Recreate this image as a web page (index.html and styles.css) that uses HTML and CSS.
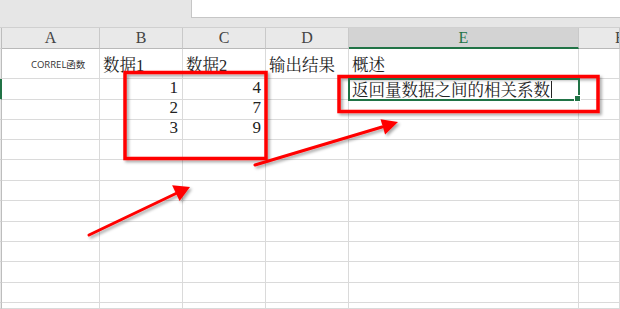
FILE: index.html
```html
<!DOCTYPE html>
<html lang="zh-CN">

<head>
  <meta charset="UTF-8">
  <meta name="viewport" content="width=device-width, initial-scale=1.0">
  <title>CORREL函数</title>
  <link rel="stylesheet" href="styles.css">
</head>

<body>

  <div class="app">
    <div class="topbar">
      <div class="formula"></div>
    </div>

    <div class="sheet">
      <!-- 列标题 -->
      <div class="hd rh"></div>
      <div class="hd">A</div>
      <div class="hd">B</div>
      <div class="hd">C</div>
      <div class="hd">D</div>
      <div class="hd active">E</div>
      <div class="hd edge">F</div>

      <!-- 第1行 -->
      <div class="rh"></div>
      <div class="cell small">CORREL函数</div>
      <div class="cell">数据1</div>
      <div class="cell">数据2</div>
      <div class="cell">输出结果</div>
      <div class="cell">概述</div>
      <div class="cell"></div>

      <!-- 第2行 -->
      <div class="rh on"></div>
      <div class="cell"></div>
      <div class="cell num">1</div>
      <div class="cell num">4</div>
      <div class="cell"></div>
      <div class="cell selected">返回量数据之间的相关系数<span class="caret"></span></div>
      <div class="cell"></div>

      <div class="rh"></div>
      <div class="cell"></div>
      <div class="cell num">2</div>
      <div class="cell num">7</div>
      <div class="cell"></div>
      <div class="cell"></div>
      <div class="cell"></div>

      <div class="rh"></div>
      <div class="cell"></div>
      <div class="cell num">3</div>
      <div class="cell num">9</div>
      <div class="cell"></div>
      <div class="cell"></div>
      <div class="cell"></div>

      <div class="rh"></div><div class="cell"></div><div class="cell"></div><div class="cell"></div><div class="cell"></div><div class="cell"></div><div class="cell"></div>
      <div class="rh"></div><div class="cell"></div><div class="cell"></div><div class="cell"></div><div class="cell"></div><div class="cell"></div><div class="cell"></div>
      <div class="rh"></div><div class="cell"></div><div class="cell"></div><div class="cell"></div><div class="cell"></div><div class="cell"></div><div class="cell"></div>
      <div class="rh"></div><div class="cell"></div><div class="cell"></div><div class="cell"></div><div class="cell"></div><div class="cell"></div><div class="cell"></div>
      <div class="rh"></div><div class="cell"></div><div class="cell"></div><div class="cell"></div><div class="cell"></div><div class="cell"></div><div class="cell"></div>
      <div class="rh"></div><div class="cell"></div><div class="cell"></div><div class="cell"></div><div class="cell"></div><div class="cell"></div><div class="cell"></div>
      <div class="rh"></div><div class="cell"></div><div class="cell"></div><div class="cell"></div><div class="cell"></div><div class="cell"></div><div class="cell"></div>
      <div class="rh"></div><div class="cell"></div><div class="cell"></div><div class="cell"></div><div class="cell"></div><div class="cell"></div><div class="cell"></div>
      <div class="rh"></div><div class="cell"></div><div class="cell"></div><div class="cell"></div><div class="cell"></div><div class="cell"></div><div class="cell"></div>
    </div>

    <!-- 红色标注 -->
    <svg class="marks" width="620" height="309" viewBox="0 0 620 309">
      <defs>
        <filter id="shadow" x="-20%" y="-20%" width="140%" height="140%">
          <feDropShadow dx="2" dy="2" stdDeviation="1.5" flood-color="#000" flood-opacity="0.35" />
        </filter>
      </defs>
      <g filter="url(#shadow)" fill="none" stroke="#f00" stroke-width="3.5">
        <rect x="125" y="72.5" width="141" height="86" />
        <rect x="339" y="76.5" width="259" height="35" />
      </g>
      <g filter="url(#shadow)" stroke="#f00" stroke-width="3" stroke-linecap="round" fill="#f00">
        <line x1="89" y1="235" x2="177" y2="193" />
        <polygon points="190,187 179.6,201.1 172.1,185.3" stroke="none" />
        <line x1="255" y1="165" x2="382" y2="127" />
        <polygon points="398,122 385.1,134.5 380.5,119.2" stroke="none" />
      </g>
    </svg>
  </div>

</body>

</html>
```

FILE: styles.css
```css
* {
  box-sizing: border-box;
}

body {
  margin: 0;
  background-color: #fff;
  font-family: "Liberation Serif", "Noto Serif CJK SC", "Noto Sans CJK SC", serif;
}

.app {
  width: 620px;
  height: 309px;
  position: relative;
  overflow: hidden;
}

.topbar {
  height: 28px;
  background-color: #e6e6e6;
  border-bottom: 1px solid #d0d0d0;
  padding-left: 191px;
}

.formula {
  height: 18px;
  background-color: #fff;
  border-left: 1px solid #c6c6c6;
  border-bottom: 1px solid #c6c6c6;
}

.sheet {
  display: grid;
  grid-template-columns: 2px 98px 83px 83px 83px 230px 41px;
  grid-template-rows: 21px 30px 21px 20px 20px 20px 21px 20px 21px 20px 20px 21px 20px 6px;
}

.hd {
  background-color: #e9e9e9;
  border-right: 1px solid #c9c9c9;
  border-bottom: 1px solid #b9b9b9;
  text-align: center;
  font-size: 16px;
  line-height: 20px;
  color: #444;
  white-space: nowrap;
  overflow: hidden;
}

.hd.active {
  background-color: #d3d3d3;
  border-bottom: 2px solid #217346;
  color: #217346;
}

.hd.edge {
  text-align: left;
  padding-left: 36px;
}

.rh {
  background-color: #e9e9e9;
  border-right: 1px solid #bdbdbd;
  border-bottom: 1px solid #d4d4d4;
}

.rh.on {
  background-color: #217346;
  border-right-color: #217346;
}

.cell {
  border-right: 1px solid #dadada;
  border-bottom: 1px solid #dadada;
  font-size: 16.5px;
  color: #222;
  padding: 0 3px;
  white-space: nowrap;
  display: flex;
  align-items: flex-end;
  padding-bottom: 2px;
}

.cell.small {
  font-family: "Open Sans", "Noto Sans CJK SC", sans-serif;
  font-size: 9.5px;
  color: #333;
  align-items: center;
  padding: 0 0 0 29px;
}

.cell.num {
  justify-content: flex-end;
  font-size: 17px;
  padding-right: 4px;
  padding-bottom: 1px;
}

.cell.selected {
  position: relative;
  z-index: 1;
  outline: 2px solid #217346;
  outline-offset: -1px;
  align-items: center;
  padding-bottom: 0;
}

.cell.selected::after {
  content: "";
  position: absolute;
  right: -3px;
  bottom: -3px;
  width: 5px;
  height: 5px;
  background-color: #217346;
  border: 1px solid #fff;
}

.caret {
  display: inline-block;
  width: 1px;
  height: 17px;
  margin-left: 1px;
  background-color: #222;
}

.marks {
  position: absolute;
  top: 0;
  left: 0;
  pointer-events: none;
}
```
